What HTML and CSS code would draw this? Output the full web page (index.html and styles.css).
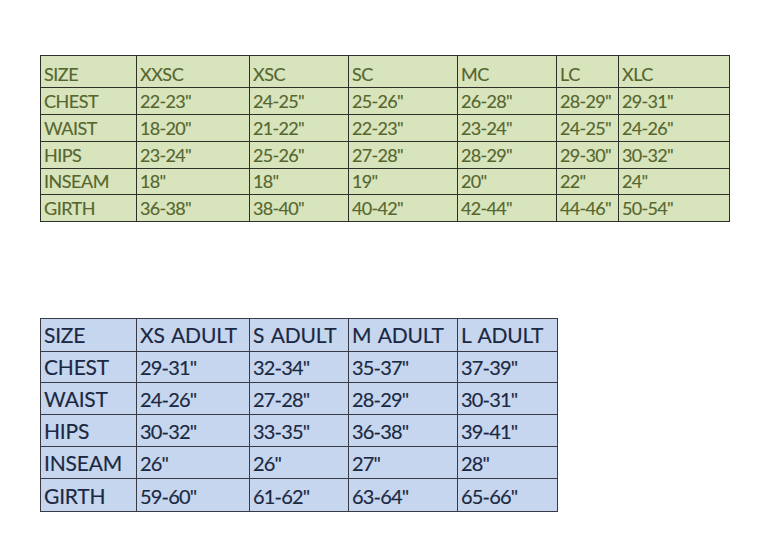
FILE: index.html
```html
<!DOCTYPE html>
<html>
<head>
<meta charset="utf-8">
<link rel="stylesheet" href="styles.css">
</head>
<body>
<div class="page">
  <table class="chart kids">
    <colgroup>
      <col class="c1"><col class="c2"><col class="c3"><col class="c4"><col class="c5"><col class="c6"><col class="c7">
    </colgroup>
    <tr class="head"><td>SIZE</td><td>XXSC</td><td>XSC</td><td>SC</td><td>MC</td><td>LC</td><td>XLC</td></tr>
    <tr><td>CHEST</td><td class="n">22-23"</td><td class="n">24-25"</td><td class="n">25-26"</td><td class="n">26-28"</td><td class="n">28-29"</td><td class="n">29-31"</td></tr>
    <tr><td>WAIST</td><td class="n">18-20"</td><td class="n">21-22"</td><td class="n">22-23"</td><td class="n">23-24"</td><td class="n">24-25"</td><td class="n">24-26"</td></tr>
    <tr><td>HIPS</td><td class="n">23-24"</td><td class="n">25-26"</td><td class="n">27-28"</td><td class="n">28-29"</td><td class="n">29-30"</td><td class="n">30-32"</td></tr>
    <tr class="short"><td>INSEAM</td><td class="n">18"</td><td class="n">18"</td><td class="n">19"</td><td class="n">20"</td><td class="n">22"</td><td class="n">24"</td></tr>
    <tr><td>GIRTH</td><td class="n">36-38"</td><td class="n">38-40"</td><td class="n">40-42"</td><td class="n">42-44"</td><td class="n">44-46"</td><td class="n">50-54"</td></tr>
  </table>

  <table class="chart adult">
    <colgroup>
      <col class="c1"><col class="c2"><col class="c3"><col class="c4"><col class="c5b">
    </colgroup>
    <tr class="head"><td>SIZE</td><td>XS ADULT</td><td>S ADULT</td><td>M ADULT</td><td>L ADULT</td></tr>
    <tr class="r31"><td>CHEST</td><td class="n">29-31"</td><td class="n">32-34"</td><td class="n">35-37"</td><td class="n">37-39"</td></tr>
    <tr><td>WAIST</td><td class="n">24-26"</td><td class="n">27-28"</td><td class="n">28-29"</td><td class="n">30-31"</td></tr>
    <tr><td>HIPS</td><td class="n">30-32"</td><td class="n">33-35"</td><td class="n">36-38"</td><td class="n">39-41"</td></tr>
    <tr><td>INSEAM</td><td class="n">26"</td><td class="n">26"</td><td class="n">27"</td><td class="n">28"</td></tr>
    <tr class="last"><td>GIRTH</td><td class="n">59-60"</td><td class="n">61-62"</td><td class="n">63-64"</td><td class="n">65-66"</td></tr>
  </table>
</div>
</body>
</html>
```
FILE: styles.css
```css
html, body {
  margin: 0;
  padding: 0;
  background: #ffffff;
}

.page {
  padding: 55px 0 0 40px;
}

.chart {
  border-collapse: collapse;
  table-layout: fixed;
  font-family: Lato, "Open Sans", sans-serif;
}

.chart td {
  padding: 0 0 0 3px;
  vertical-align: bottom;
  white-space: nowrap;
  overflow: hidden;
  line-height: 1;
  -webkit-text-stroke: 0.15px currentColor;
}

.c1 { width: 96px; }
.c2 { width: 113px; }
.c3 { width: 99px; }
.c4 { width: 109px; }
.c5 { width: 99px; }
.c5b { width: 100px; }
.c6 { width: 62px; }
.c7 { width: 111px; }

/* kids chart (green) */
.kids {
  width: 689px;
  background: #d8e4bc;
  color: #56662f;
  font-size: 18px;
  letter-spacing: -0.5px;
}

.kids td {
  border: 1px solid #2e2f28;
  height: 27px;
  padding-bottom: 4px;
  box-sizing: border-box;
}

.kids td.n {
  letter-spacing: -0.7px;
}

.kids .head td { height: 32px; }
.kids .short td { height: 26px; }

/* adult chart (blue) */
.adult {
  margin-top: 96px;
  width: 517px;
  background: #c6d6ee;
  color: #1b2842;
  font-size: 21px;
  letter-spacing: -0.2px;
  word-spacing: 2px;
}

.adult td {
  border: 1px solid #373a42;
  height: 32px;
  padding-bottom: 5px;
  box-sizing: border-box;
}

.adult td.n {
  font-size: 20px;
  letter-spacing: -0.8px;
}

.adult .head td { height: 33px; padding-bottom: 6px; }
.adult .r31 td { height: 31px; }
.adult .last td { height: 33px; }
```
